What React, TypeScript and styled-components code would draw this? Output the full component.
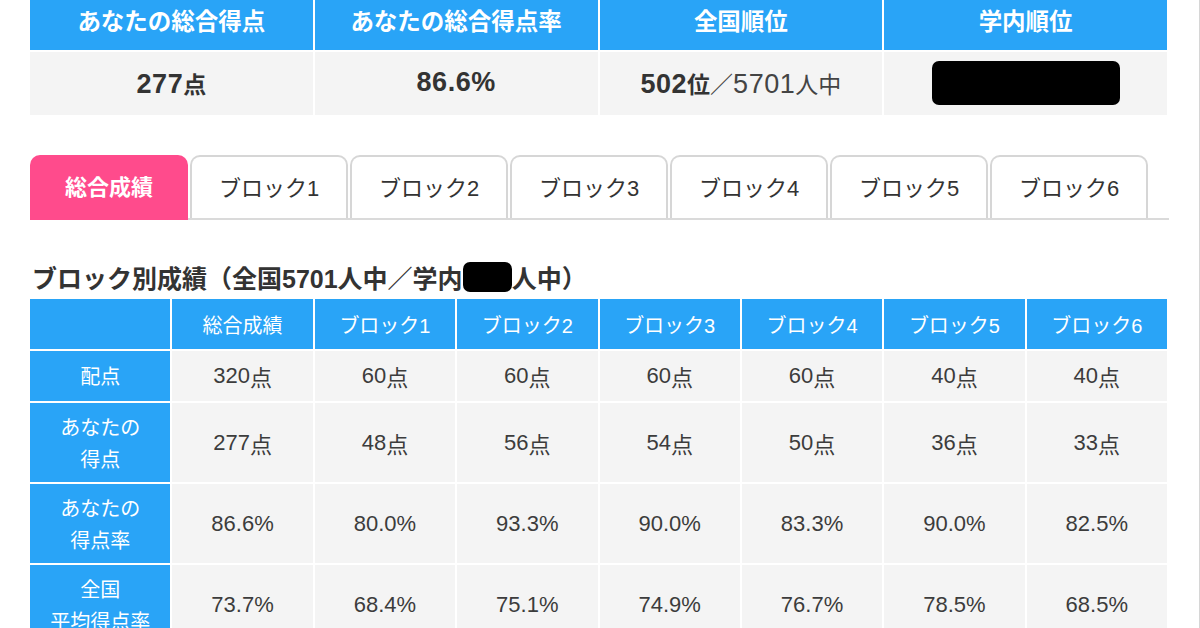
import React from "react";
import styled, { createGlobalStyle } from "styled-components";

const GlobalStyle = createGlobalStyle`
  html, body {
    margin: 0;
    padding: 0;
    overflow: hidden;
    background: #ffffff;
  }
  * { box-sizing: border-box; }
`;

const BLUE = "#29a4f7";
const PINK = "#ff4b8c";
const CELL = "#f4f4f4";
const TEXT = "#383838";
const FONT = `"Liberation Sans", "Noto Sans CJK JP", sans-serif`;

const Page = styled.div`
  width: 1200px;
  height: 628px;
  padding: 0 31px 0 30px;
  font-family: ${FONT};
  color: ${TEXT};
  border-right: 1px solid #d6d6d6;
  display: flex;
  flex-direction: column;
`;

const Summary = styled.div`
  display: grid;
  grid-template-columns: repeat(4, 1fr);
  grid-template-rows: 50px 63px;
  column-gap: 2px;
  row-gap: 2px;
  width: 1137px;
`;

const SummaryHead = styled.div`
  background: ${BLUE};
  color: #fff;
  font-size: 23.5px;
  font-weight: 700;
  display: flex;
  align-items: center;
  justify-content: center;
  padding-bottom: 10px;
  font-family: "Noto Sans CJK JP", sans-serif;
`;

const SummaryCell = styled.div`
  background: ${CELL};
  display: flex;
  align-items: center;
  justify-content: center;
  padding-bottom: 2px;
  font-size: 27px;
  letter-spacing: 0.5px;
  color: #333;
`;

const Strong = styled.span`
  font-weight: 700;
`;

const Unit = styled.span<{ $bold?: boolean }>`
  font-size: 23px;
  letter-spacing: 0;
  font-weight: ${(p) => (p.$bold ? 700 : 400)};
`;

const Light = styled.span`
  font-weight: 400;
  color: #444;
`;

const Redacted = styled.div`
  width: 188px;
  height: 44px;
  background: #000;
  border-radius: 7px;
`;

const TabBar = styled.div`
  display: flex;
  gap: 2px;
  width: 1139px;
  margin-top: 40px;
  border-bottom: 2px solid #dadada;
`;

const Tab = styled.div<{ $active?: boolean }>`
  width: 158px;
  height: ${(p) => (p.$active ? "65px" : "63px")};
  margin-bottom: ${(p) => (p.$active ? "-2px" : "0")};
  padding-bottom: ${(p) => (p.$active ? "6px" : "4px")};
  display: flex;
  align-items: center;
  justify-content: center;
  border-radius: 10px 10px 0 0;
  font-size: 22px;
  background: ${(p) => (p.$active ? PINK : "#fff")};
  color: ${(p) => (p.$active ? "#fff" : "#333")};
  font-weight: ${(p) => (p.$active ? 700 : 400)};
  border: ${(p) => (p.$active ? "none" : "2px solid #d6d6d6")};
  border-bottom: none;
  font-family: ${(p) => (p.$active ? `"Noto Sans CJK JP", sans-serif` : FONT)};
`;

const Title = styled.h2`
  margin: 42px 0 7px 2px;
  height: 30px;
  display: flex;
  align-items: center;
  font-size: 25px;
  font-weight: 700;
  color: #333;
  white-space: nowrap;
`;

const TitleRedact = styled.span`
  display: inline-block;
  width: 49px;
  height: 30px;
  background: #000;
  border-radius: 7px;
`;

const Grid = styled.div`
  display: grid;
  width: 1137px;
  grid-template-columns: repeat(8, 1fr);
  grid-template-rows: 50px 50px 79px 79px 79px;
  gap: 2px;
`;

const HeadCell = styled.div`
  background: ${BLUE};
  color: #fff;
  font-size: 20px;
  display: flex;
  align-items: center;
  justify-content: center;
`;

const RowHead = styled.div`
  background: ${BLUE};
  color: #fff;
  font-size: 20px;
  line-height: 32px;
  display: flex;
  align-items: center;
  justify-content: center;
  text-align: center;
  font-family: "Noto Sans CJK JP", sans-serif;
`;

const DataCell = styled.div`
  background: ${CELL};
  color: #3c3c3c;
  font-size: 22px;
  display: flex;
  align-items: center;
  justify-content: center;
`;

const DataUnit = styled.span`
  font-size: 22px;
`;

const columns = ["総合成績", "ブロック1", "ブロック2", "ブロック3", "ブロック4", "ブロック5", "ブロック6"];

type Row = { label: React.ReactNode; values: string[]; unit?: string };

const rows: Row[] = [
  { label: "配点", values: ["320", "60", "60", "60", "60", "40", "40"], unit: "点" },
  {
    label: (
      <>
        あなたの
        <br />
        得点
      </>
    ),
    values: ["277", "48", "56", "54", "50", "36", "33"],
    unit: "点",
  },
  {
    label: (
      <>
        あなたの
        <br />
        得点率
      </>
    ),
    values: ["86.6%", "80.0%", "93.3%", "90.0%", "83.3%", "90.0%", "82.5%"],
  },
  {
    label: (
      <>
        全国
        <br />
        平均得点率
      </>
    ),
    values: ["73.7%", "68.4%", "75.1%", "74.9%", "76.7%", "78.5%", "68.5%"],
  },
];

export default function App() {
  return (
    <>
      <GlobalStyle />
      <Page>
        <Summary>
          <SummaryHead>あなたの総合得点</SummaryHead>
          <SummaryHead>あなたの総合得点率</SummaryHead>
          <SummaryHead>全国順位</SummaryHead>
          <SummaryHead>学内順位</SummaryHead>
          <SummaryCell>
            <Strong>
              277<Unit $bold>点</Unit>
            </Strong>
          </SummaryCell>
          <SummaryCell>
            <Strong>86.6%</Strong>
          </SummaryCell>
          <SummaryCell>
            <Strong>
              502<Unit $bold>位</Unit>
            </Strong>
            <Light>
              <Unit>／</Unit>5701<Unit>人中</Unit>
            </Light>
          </SummaryCell>
          <SummaryCell>
            <Redacted />
          </SummaryCell>
        </Summary>

        <TabBar>
          <Tab $active>総合成績</Tab>
          {columns.slice(1).map((c) => (
            <Tab key={c}>{c}</Tab>
          ))}
        </TabBar>

        <Title>
          ブロック別成績（全国5701人中／学内
          <TitleRedact />
          人中）
        </Title>

        <Grid>
          <HeadCell />
          {columns.map((c) => (
            <HeadCell key={c}>{c}</HeadCell>
          ))}
          {rows.map((r, i) => (
            <React.Fragment key={i}>
              <RowHead>{r.label}</RowHead>
              {r.values.map((v, j) => (
                <DataCell key={j}>
                  {v}
                  {r.unit && <DataUnit>{r.unit}</DataUnit>}
                </DataCell>
              ))}
            </React.Fragment>
          ))}
        </Grid>
      </Page>
    </>
  );
}
